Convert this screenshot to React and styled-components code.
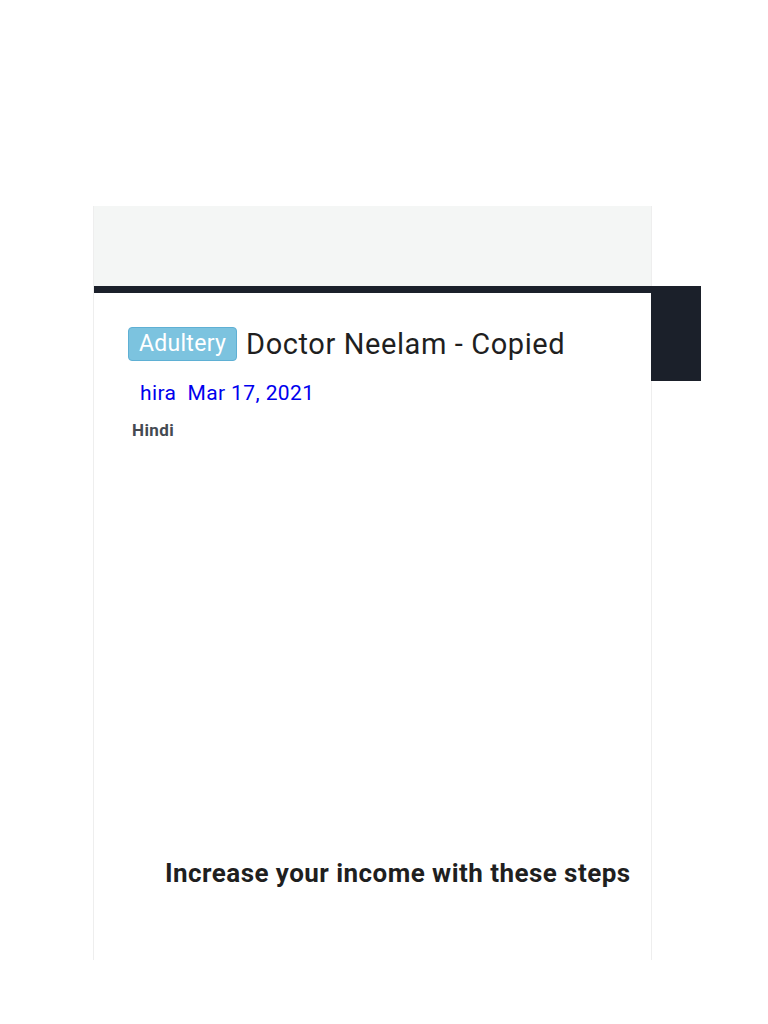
import styled, { createGlobalStyle } from "styled-components";

const GlobalStyle = createGlobalStyle`
  body {
    margin: 0;
    background: #ffffff;
    font-family: Roboto, "Liberation Sans", Arial, sans-serif;
  }
`;

const Page = styled.div`
  padding: 206px 0 0 94px;
  min-height: 1024px;
  box-sizing: border-box;
`;

const Card = styled.article`
  width: 557px;
  height: 754px;
  box-sizing: border-box;
  background: #fff;
  box-shadow: -1px 0 0 #eeeeee, 1px 0 0 #eeeeee;
  display: flex;
  flex-direction: column;
`;

const Banner = styled.div`
  height: 80px;
  background: #f4f6f5;
`;

const DarkBar = styled.div`
  position: relative;
  height: 7px;
  background: #1b202a;
`;

const Corner = styled.div`
  position: absolute;
  left: 100%;
  top: 0;
  width: 50px;
  height: 95px;
  background: #1b202a;
`;

const Body = styled.div`
  padding: 34px 0 0 34px;
  flex: 1;
  display: flex;
  flex-direction: column;
`;

const TitleRow = styled.h1`
  margin: 0;
  display: flex;
  align-items: center;
  gap: 9px;
  font-size: 29px;
  font-weight: 400;
  letter-spacing: 0.6px;
  color: #1f1f1f;
  line-height: 34px;
`;

const Badge = styled.span`
  display: inline-flex;
  align-items: center;
  justify-content: center;
  height: 34px;
  width: 109px;
  box-sizing: border-box;
  border: 1px solid #5fb0d4;
  border-radius: 4px;
  background: #7cc3df;
  color: #fff;
  font-size: 23px;
  letter-spacing: 0.3px;
`;

const Meta = styled.div`
  margin: 20px 0 0 12px;
  display: flex;
  gap: 11px;
  font-size: 21px;
  letter-spacing: 0.4px;
  color: #0000ee;
  line-height: 24px;
`;

const Lang = styled.div`
  margin: 15px 0 0 4px;
  font-size: 17px;
  letter-spacing: 0.4px;
  font-weight: 700;
  color: #444a52;
`;

const Heading = styled.h2`
  margin: 418px 0 0 37px;
  font-size: 26px;
  letter-spacing: 0.45px;
  font-weight: 700;
  color: #1f1f1f;
  line-height: 30px;
`;

export default function App() {
  return (
    <>
      <GlobalStyle />
      <Page>
        <Card>
          <Banner />
          <DarkBar>
            <Corner />
          </DarkBar>
          <Body>
            <TitleRow>
              <Badge>Adultery</Badge>
              Doctor Neelam - Copied
            </TitleRow>
            <Meta>
              <span>hira</span>
              <span>Mar 17, 2021</span>
            </Meta>
            <Lang>Hindi</Lang>
            <Heading>Increase your income with these steps</Heading>
          </Body>
        </Card>
      </Page>
    </>
  );
}
